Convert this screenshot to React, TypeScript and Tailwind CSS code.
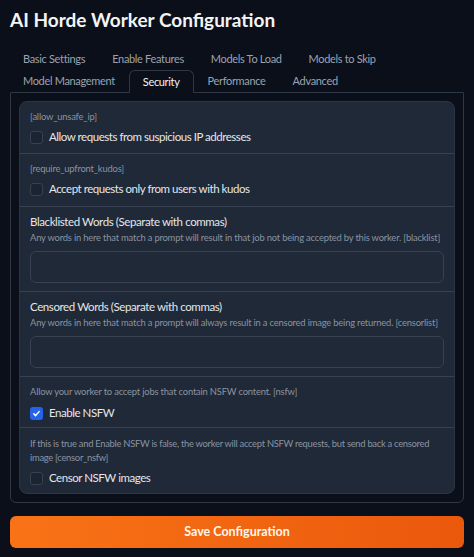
import { useState } from "react";

const font = { fontFamily: "Lato, 'Noto Sans', 'Liberation Sans', sans-serif" };

function Check({ label, on }: { label: string; on?: boolean }) {
  const [checked, setChecked] = useState(!!on);
  return (
    <label className="flex items-center gap-[6px] h-[18px] cursor-pointer" onClick={() => setChecked(!checked)}>
      {checked ? (
        <span className="w-[13px] h-[13px] rounded-[3px] bg-[#2563eb] flex items-center justify-center">
          <svg width="9" height="9" viewBox="0 0 12 12" fill="none">
            <path d="M2.5 6.5l2.3 2.3 4.7-5.3" stroke="white" strokeWidth="2" strokeLinecap="round" strokeLinejoin="round" />
          </svg>
        </span>
      ) : (
        <span className="w-[13px] h-[13px] rounded-[3px] border border-[#374151] bg-[#1b2431]"></span>
      )}
      <span className="text-[11.5px] tracking-[-0.04em] text-[#e5e7eb]">{label}</span>
    </label>
  );
}

function TextField({ label, desc }: { label: string; desc: string }) {
  return (
    <div className="px-[10px] pt-[6px] pb-[8px] border-t border-[#374151]">
      <div className="text-[11.5px] tracking-[-0.035em] leading-[17px] text-[#e5e7eb]">{label}</div>
      <div className="text-[9.4px] tracking-[-0.02em] leading-[16px] text-[#8b93a1]">{desc}</div>
      <textarea className="block mt-[5px] w-full h-[32px] rounded-[6px] border border-[#374151] bg-[#1f2937] resize-none outline-none"></textarea>
    </div>
  );
}

export default function App() {
  const row1 = ["Basic Settings", "Enable Features", "Models To Load", "Models to Skip"];
  const row2 = ["Model Management", "Security", "Performance", "Advanced"];
  return (
    <div className="min-h-screen bg-[#0b0f19] px-[10px] pt-[5px] pb-[10px]" style={font}>
      <h1 className="text-[19px] leading-[30px] font-bold text-[#f3f4f6]">AI Horde Worker Configuration</h1>
      <div className="mt-[13px] flex flex-col">
        <div className="flex gap-px">
          {row1.map((t) => (
            <div key={t} className="px-[13px] h-[22px] flex items-center text-[11px] tracking-[-0.03em] text-[#9ca3af]">{t}</div>
          ))}
        </div>
        <div className="flex gap-px">
          {row2.map((t) =>
            t === "Security" ? (
              <div key={t} className="relative z-10 -mb-px px-[13px] h-[23px] flex items-center text-[11px] tracking-[-0.03em] text-[#f3f4f6] bg-[#0b0f19] border border-b-0 border-[#2d3746] rounded-t-[6px]">{t}</div>
            ) : (
              <div key={t} className="px-[13px] h-[22px] flex items-center text-[11px] tracking-[-0.03em] text-[#9ca3af]">{t}</div>
            )
          )}
        </div>
      </div>
      <div className="border border-[#2d3746] rounded-b-[6px] p-[8px]">
        <div className="rounded-[8px] bg-[#1f2937] border border-[#2b3543] overflow-hidden">
          <div className="px-[10px] pt-[7px] pb-[7px] flex flex-col gap-[3px]">
            <div className="text-[9.4px] tracking-[-0.02em] leading-[16px] text-[#8b93a1]">[allow_unsafe_ip]</div>
            <Check label="Allow requests from suspicious IP addresses" />
          </div>
          <div className="px-[10px] pt-[7px] pb-[8px] flex flex-col gap-[3px] border-t border-[#374151]">
            <div className="text-[9.4px] tracking-[-0.02em] leading-[16px] text-[#8b93a1]">[require_upfront_kudos]</div>
            <Check label="Accept requests only from users with kudos" />
          </div>
          <TextField
            label="Blacklisted Words (Separate with commas)"
            desc="Any words in here that match a prompt will result in that job not being accepted by this worker. [blacklist]"
          />
          <TextField
            label="Censored Words (Separate with commas)"
            desc="Any words in here that match a prompt will always result in a censored image being returned. [censorlist]"
          />
          <div className="px-[10px] pt-[7px] pb-[5px] flex flex-col gap-[4px] border-t border-[#374151]">
            <div className="text-[9.4px] tracking-[-0.02em] leading-[16px] text-[#8b93a1]">Allow your worker to accept jobs that contain NSFW content. [nsfw]</div>
            <Check label="Enable NSFW" on />
          </div>
          <div className="px-[10px] pt-[9px] pb-[6px] flex flex-col gap-[4px] border-t border-[#374151]">
            <div className="text-[9.4px] tracking-[-0.03em] leading-[14px] text-[#8b93a1]">If this is true and Enable NSFW is false, the worker will accept NSFW requests, but send back a censored image [censor_nsfw]</div>
            <Check label="Censor NSFW images" />
          </div>
        </div>
      </div>
      <button className="mt-[13px] w-full h-[32px] rounded-[6px] bg-gradient-to-r from-[#f97316] to-[#ea580c] text-[12.5px] font-bold text-[#fff7ed]">
        Save Configuration
      </button>
    </div>
  );
}
